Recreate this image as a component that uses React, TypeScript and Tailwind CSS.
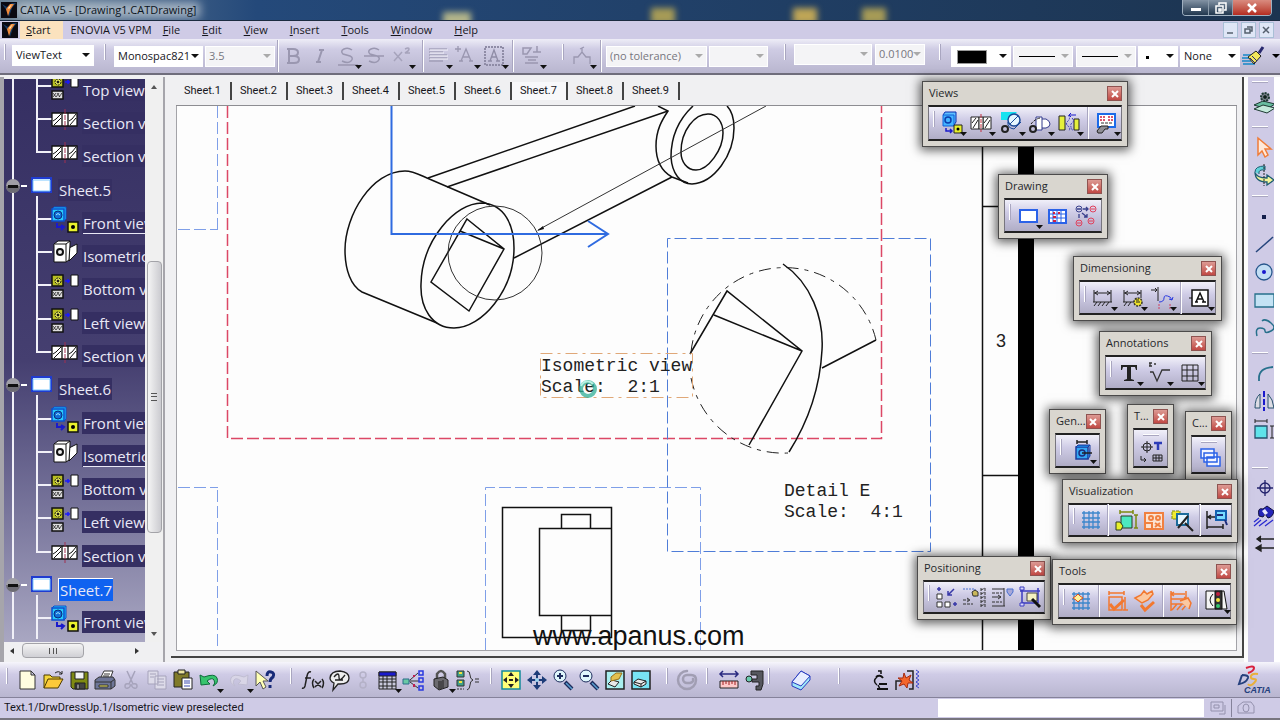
import { FC, ReactNode, useState } from "react";
import clsx from "clsx";

// every icon is drawn on a 24 x 24 grid
const icons: Record<string, ReactNode> = {
  bold: <path d="M8 5v14M8 5h4q5 0 5 3.500t-5 3.500h-4h5q5 0 5 3.500t-5 3.500h-7M6 5h3" fill="none" stroke="#9a97b0" strokeWidth="2" />,
  italic: <path d="M11 6h5M8 18h5M14 6l-4 12" fill="none" stroke="#9a97b0" strokeWidth="2" />,
  underline: <path d="M17 6q-4-3-8-1t-1 5l7 2q4 2 1 5t-9 0M3 21h20" fill="none" stroke="#9a97b0" strokeWidth="1.500" />,
  strike: <path d="M17 6q-4-3-8-1t-1 5l7 2q4 2 1 5t-9 0M2 12h20" fill="none" stroke="#9a97b0" strokeWidth="1.500" />,
  power: <path d="M5 8l8 9M13 8l-8 9M16 5q4-2 4 0t-4 4h5" fill="none" stroke="#a6a3bb" strokeWidth="1.500" />,
  align: (
    <g fill="none">
      <path d="M3 5h18M3 8h14M3 11h18M3 14h18M3 17h14" stroke="#8f8ca6" />
      <path d="M4 6h18M4 9h14M4 12h18M4 15h18" stroke="#f5f4fb" />
    </g>
  ),
  anchor: <path d="M4 2v6M1 5h6M7 17l5-12 5 12M9 13h6M5 17h4M15 17h4" fill="none" stroke="#9a97b0" strokeWidth="1.300" />,
  frame: (
    <g fill="none" stroke="#8f8ca6">
      <rect x="3" y="3" width="18" height="18" strokeWidth="2" strokeDasharray="2 1" />
      <path d="M8 17l4-11 4 11M9 13h6M6 17h4M14 17h4" strokeWidth="1.300" />
    </g>
  ),
  symbols: <path d="M3 4v6h4l4-6zM13 8h8M17 2v6M5 13h13M8 16h8M5 19h13" fill="none" stroke="#9a97b0" strokeWidth="1.500" />,
  tolerance: <path d="M4 20v-7h4l4-5 4 5h4v7M12 8v-4M10 5l4-2" fill="none" stroke="#9a97b0" strokeWidth="1.300" />,
  brush: (
    <g>
      <path d="M2 11h9M1 14h9M1 17h9M2 20h12" stroke="#1688c8" strokeWidth="1.500" />
      <path d="M7 13l8-6 5 5-7 8z" fill="#f2e85c" stroke="#222" />
      <path d="M9 14l5 5M11 12l5 5" stroke="#28286e" />
      <path d="M18 9l4-6" stroke="#28286e" strokeWidth="3" />
    </g>
  ),
  newFile: <path d="M5 3h11l4 4v14h-15zM16 3v4h4" fill="#fffde0" stroke="#333" />,
  open: (
    <g stroke="#4c3a00">
      <path d="M3 20v-13h6l2 2h8v3" fill="#f5d63d" />
      <path d="M3 20l4-9h15l-5 9z" fill="#fcc93a" />
      <path d="M14 5q4-3 7 1M21 3v3h-3" fill="none" stroke="#222" />
    </g>
  ),
  save: (
    <g stroke="#222">
      <path d="M4 4h17v17h-15l-2-2z" fill="#7f8a12" />
      <path d="M8 4h9v7h-9z" fill="#f3f3f3" />
      <path d="M8 15h10v6h-10z" fill="#444" />
      <path d="M10 16h2v5h-2z" fill="#eee" />
    </g>
  ),
  print: (
    <g stroke="#333">
      <path d="M7 11l4-8h9l-3 8z" fill="#fff" />
      <path d="M2 12l4-3h14l2 3v6l-4 3h-16z" fill="#6e7698" />
      <path d="M2 14h16l4-3M18 14v7M11 6h6M10 8h6" fill="none" />
      <path d="M6 17h9v2h-9z" fill="#f2e85c" />
    </g>
  ),
  cut: <path d="M8 3l6 13M16 3l-6 13M10 16q-4-1-4 2t3 2 2-4M14 16q4-1 4 2t-3 2-2-4" fill="none" stroke="#a6a3bb" strokeWidth="1.500" />,
  copy: <path d="M3 3h10v13h-10zM10 8h11v13h-11zM5 6h6M5 9h4M12 11h7M12 14h7M12 17h7" fill="#dddbe9" stroke="#a6a3bb" />,
  paste: (
    <g stroke="#222">
      <path d="M3 4h15v15h-15z" fill="#807a28" />
      <path d="M7 2h7v4h-7z" fill="#eee6a0" />
      <path d="M11 10h10v11h-10z" fill="#fff" />
      <path d="M13 13h6M13 15h6M13 18h6" stroke="#3c4cb0" />
    </g>
  ),
  undo: <path d="M3 7l1 10 9-1-3-3q5-4 7-1t-1 6q6-3 4-8t-13-1z" fill="#36c46d" stroke="#0d6b3a" />,
  redo: <path d="M21 7l-1 10-9-1 3-3q-5-4-7-1t1 6q-6-3-4-8t13-1z" fill="#d8d5e6" stroke="#c0bdd2" />,
  help: (
    <g>
      <path d="M3 3v15l4-4 3 7 3-2-3-6h5z" fill="#ffffb5" stroke="#555" />
      <path d="M14 8q0-5 4-4 4 1 2 5-3 2-3 5M17 17v3" fill="none" stroke="#172a78" strokeWidth="3" />
    </g>
  ),
  formula: (
    <g fill="none" stroke="#222" strokeWidth="1.500">
      <path d="M10 4q-3-1-4 4l-2 10q-1 3-3 2M4 10h6" />
      <path d="M13 11q-3 4 0 9M21 11q3 4 0 9M14 13l6 6M20 13l-6 6" />
    </g>
  ),
  comment: (
    <g fill="#eee" stroke="#222" strokeWidth="1.300">
      <path d="M3 10q1-7 10-7 9 1 9 7t-9 6l-2 0-5 6 1-7q-4-2-4-5z" />
      <path d="M7 9q5-6 5 0t6-2M8 12h8" fill="none" />
    </g>
  ),
  link: <path d="M12 4a3 3 0 100 6 3 3 0 000-6zM12 10v4M12 14a3 3 0 100 6 3 3 0 000-6z" fill="none" stroke="#b4b1c7" strokeWidth="1.500" />,
  table: (
    <g stroke="#222">
      <path d="M4 4h17v17h-17z" fill="#c9c9dc" />
      <path d="M4 4h17v4h-17z" fill="#1a1acc" />
      <path d="M4 11h17M4 14h17M4 18h17M8 8v13M12 8v13M17 8v13" />
    </g>
  ),
  structure: (
    <g fill="none">
      <path d="M7 13h10M8 12l8-7M8 14l8 6" stroke="#333" />
      <path d="M1 11h6v5h-6z" fill="#69c9a5" stroke="#2a6d88" />
      <path d="M17 3h4v4h-4zM17 10h4v4h-4zM17 18h4v4h-4z" stroke="#2a3ae0" strokeWidth="1.500" />
      <path d="M12 7v2M12 16v3" stroke="#c02050" strokeWidth="2" />
    </g>
  ),
  lock: (
    <g stroke="#222">
      <path d="M8 11v-5q4-6 8 0v5" fill="none" stroke="#555" strokeWidth="2.500" />
      <path d="M5 11l9-2 5 3v7l-9 3-5-4z" fill="#6c6b70" />
      <path d="M10 13v8M12 13v8M14 12v8" />
    </g>
  ),
  equiv: (
    <g fill="none" stroke="#333">
      <path d="M2 3h7v6h-7zM2 12h7v6h-7z" fill="#3fa089" />
      <path d="M4 5h3M4 14h3" stroke="#f4e33d" strokeWidth="2" />
      <path d="M12 3q3 0 3 4t3 5q-3 1-3 5t-3 5M20 11h4M20 14h4" />
      <path d="M2 21h7" strokeDasharray="2 1" />
    </g>
  ),
  fitAll: (
    <g>
      <path d="M3 3h18v18h-18z" fill="#ffff78" stroke="#158a9a" strokeWidth="1.500" />
      <path d="M12 4l3 4h-6zM12 20l3-4h-6zM4 12l4-3v6zM20 12l-4-3v6zM10 11h4v2h-4z" fill="#222" />
    </g>
  ),
  pan: (
    <g fill="#1d3c78">
      <path d="M12 2l4 5h-8zM12 22l4-5h-8zM2 12l5-4v8zM22 12l-5-4v8z" />
      <path d="M12 6v12M6 12h12" stroke="#1d3c78" strokeWidth="2" />
      <circle cx="12" cy="12" r="2" fill="#9fd5f0" />
    </g>
  ),
  zoomIn: (
    <g fill="none" stroke="#1d2c5c">
      <path d="M14 14l7 7" strokeWidth="4" />
      <path d="M15 15l6 6" stroke="#5aa0d0" strokeWidth="1.500" />
      <circle cx="9" cy="8" r="6" fill="#dff6fb" />
      <path d="M6 8h6M9 5v6" strokeWidth="2" />
    </g>
  ),
  zoomOut: (
    <g fill="none" stroke="#1d2c5c">
      <path d="M14 14l7 7" strokeWidth="4" />
      <path d="M15 15l6 6" stroke="#5aa0d0" strokeWidth="1.500" />
      <circle cx="9" cy="8" r="6" fill="#dff6fb" />
      <path d="M6 8h6" strokeWidth="2" />
    </g>
  ),
  viewSwap: (
    <g stroke="#222">
      <path d="M3 3h18v18h-18z" fill="#a9efef" strokeWidth="1.500" />
      <path d="M5 16l4-4 7 2-4 5z" fill="#e8e8e8" />
      <path d="M8 9l5-4h6l-3 6-8 2z" fill="#e2c04d" stroke="#96701c" />
    </g>
  ),
  viewHide: (
    <g stroke="#222">
      <path d="M3 3h18v18h-18z" fill="#78e4f4" strokeWidth="1.500" />
      <path d="M5 14l4-3 8 2v3l-5 3-7-3z" fill="#e8e8e8" />
      <path d="M5 14l7 2 5-3M12 16v3" fill="none" />
    </g>
  ),
  swirl: (
    <g fill="none" strokeLinecap="round">
      <path d="M12 3a9 9 0 109 9q0-5-5-5h-4a4 4 0 100 8h3q4-1 3-4" stroke="#a19eb3" strokeWidth="2.500" />
    </g>
  ),
  ruler: (
    <g fill="none" stroke="#2a2a80">
      <path d="M3 6h18M6 3l-3 3 3 3M18 3l3 3-3 3" strokeWidth="1.500" />
      <path d="M3 13h18v7h-18z" fill="#ffc9c9" stroke="#222" />
      <path d="M6 13v4M9 13v3M12 13v4M15 13v3M18 13v4" stroke="#a02020" />
    </g>
  ),
  caliper: (
    <g stroke="#222">
      <path d="M8 3h12v13l-2 6h-5v-4h3v-4h-7v-3h5v-4h-6z" fill="#56575e" />
      <circle cx="6" cy="11" r="3" fill="#6ccbb0" />
    </g>
  ),
  slab: (
    <g stroke="#2a3cc0">
      <path d="M3 14l9-11 9 5v4l-9 10-9-4z" fill="#9fe8f8" />
      <path d="M3 14l9-11 9 5-9 10z" fill="#e8edff" />
    </g>
  ),
  robot: (
    <g fill="none" stroke="#111">
      <path d="M7 9q4-3 7 1M8 21h11M10 16h8" strokeWidth="2" />
      <path d="M9 3h3v3M8 9q-5 4 0 8M9 17l2 4" strokeWidth="1.500" />
    </g>
  ),
  explode: (
    <g fill="none" stroke="#222">
      <path d="M1 22v-9h7M12 3h6v18h-4" strokeWidth="1.500" />
      <path d="M21 2l3 2-3 2 3 2-3 2 3 2-3 2 3 2-3 2 3 2" stroke="#3c48d0" />
      <path d="M9 5l2 5 5-3-2 5 4 3-5 0-1 5-3-4-5 2 3-5-4-3 5 0z" fill="#f4662b" stroke="#a52a10" />
    </g>
  ),
  frontView: (
    <g>
      <path d="M3 4l2-3h11v10l-2 3" fill="#5fc0ff" stroke="#0c2fae" />
      <path d="M3 4h11v11h-11z" fill="#43b4ff" stroke="#1060d8" />
      <circle cx="8" cy="9" r="3" fill="none" stroke="#0b3cad" strokeWidth="1.500" />
      <path d="M6 17v3h6M10 18l2 2-2 2" fill="none" stroke="#1a1acc" strokeWidth="1.500" />
      <path d="M14 14h8v8h-8z" fill="#e8f02b" stroke="#222" />
      <circle cx="18" cy="18" r="1.500" />
    </g>
  ),
  sectionView: (
    <g stroke="#222" fill="#fff">
      <path d="M2 6h8v12h-8zM14 6h8v12h-8z" />
      <path d="M10 6h4v12h-4z" />
      <path d="M3 12l4-5M4 17l5-8M15 12l4-5M16 17l5-8" />
      <path d="M12 3v18" stroke="#c03040" strokeDasharray="4 1" />
    </g>
  ),
  detailView: (
    <g stroke="#222">
      <path d="M2 1h16l-8 8h-8z" fill="#15e2f0" stroke="none" />
      <circle cx="15" cy="9" r="6" fill="#e6f7ff" stroke="#1a4a98" strokeWidth="1.500" />
      <path d="M11 13l8-8M9 11q-1 6 6 7l7-7" fill="none" stroke="#1a4a98" />
      <circle cx="6" cy="18" r="3" fill="none" strokeWidth="2" />
    </g>
  ),
  clipView: (
    <g stroke="#222" fill="none">
      <path d="M8 6h6v13h-6zM14 8h4q4 2 4 5t-4 4h-4" fill="#fff" stroke="#333a8c" />
      <circle cx="5" cy="18" r="3" strokeWidth="2" />
      <path d="M3 13q4-5 9-6" strokeDasharray="3 1" />
    </g>
  ),
  breakView: (
    <g fill="none" stroke="#222">
      <path d="M2 5h6v14h-6zM17 8h5v11h-5z" fill="#e6f03c" />
      <path d="M11 4q3 3 0 6t0 5 1 5M15 7q3 3 0 5t1 8" stroke="#3636b8" strokeDasharray="2 1" />
      <path d="M19 4h-7M14 2l-2 2 2 2" stroke="#1a1acc" />
    </g>
  ),
  wizard: (
    <g>
      <path d="M4 3h17v13h-17z" fill="#fff" stroke="#1c6ae8" strokeWidth="2" />
      <path d="M6 6h6M6 9h6M14 6h5M14 9h5" stroke="#d02040" strokeWidth="1.500" strokeDasharray="2 1" />
      <path d="M7 12h11" stroke="#333" strokeDasharray="3 1" />
      <path d="M3 20l4-5h7v3h-3l-3 4h-4z" fill="#8f8f96" stroke="#222" />
    </g>
  ),
  sheet: <path d="M4 6h17v12h-17z" fill="#fff" stroke="#2b62e8" strokeWidth="2" />,
  newDetail: (
    <g>
      <path d="M4 6h17v13h-17z" fill="#fff" stroke="#2b62e8" strokeWidth="2" />
      <path d="M4 10h17M4 14h17M8 6v13M12 6v13M16 6v13" stroke="#2b62e8" />
      <path d="M8 9h2M13 9h2M8 13h3M8 17h3" stroke="#d02040" strokeWidth="2" />
    </g>
  ),
  instantiate: (
    <g fill="none" stroke="#e0405c">
      <circle cx="19" cy="5" r="3" /><path d="M17 5h4" />
      <circle cx="5" cy="19" r="3" /><path d="M3 19h4" />
      <circle cx="17" cy="17" r="3" /><path d="M15 17h4" />
      <circle cx="5" cy="5" r="3" stroke="#39408c" />
      <path d="M3 5h4M9 5h5M5 10v4M8 9l5 4M12 3l2 2-2 2M10 13h3v-3" stroke="#39408c" strokeWidth="1.300" />
    </g>
  ),
  dimension: <path d="M3 4v12M20 4v12M3 7h17M7 5l-3 2 3 2M16 5l3 2-3 2M2 16h19M3 20l3-4M7 20l3-4M11 20l3-4M15 20l3-4" fill="none" stroke="#222" />,
  dimensionGen: (
    <g>
      <path d="M3 4v12M20 4v8M3 7h17M7 5l-3 2 3 2M16 5l3 2-3 2M2 16h11M3 20l3-4M7 20l3-4" fill="none" stroke="#222" />
      <circle cx="17" cy="16" r="4" fill="#f0e428" stroke="#333" strokeWidth="1.500" strokeDasharray="2 1" />
      <path d="M15 16h4M15 14h3" stroke="#222" />
    </g>
  ),
  interrupt: (
    <g fill="none" stroke="#222">
      <path d="M1 4h6M5 2l2 2-2 2M8 1v14" />
      <path d="M9 16q5 0 5-4t6-1l2 3M19 13l3 1 1-3" stroke="#2a3ae0" />
      <path d="M9 18v5M20 18v5" stroke="#d04060" strokeDasharray="2 1" />
    </g>
  ),
  datum: (
    <g fill="none" stroke="#111">
      <path d="M4 4h16v16h-16z" fill="#fff" strokeWidth="1.500" />
      <path d="M1 12h3" />
      <path d="M8 16l4-9 4 9M9 13h5M7 16h3M14 16h4" strokeWidth="1.500" />
    </g>
  ),
  text: <path d="M4 4h16v5h-1l-1-3h-4v12l3 1v1h-10v-1l3-1v-12h-4l-1 3h-1z" fill="#222" />,
  roughness: <path d="M2 2h3M2 5h3M3 2v3M7 3h2M3 11h3l4 9 5-11h8" fill="none" stroke="#333" strokeWidth="1.300" />,
  grid: <path d="M4 4h16v16h-16zM9 4v16M15 4v16M4 9h16M4 15h16" fill="none" stroke="#222" />,
  generate: (
    <g>
      <path d="M6 8h12v12h-12z" fill="#35a8f4" stroke="#1c3c9c" strokeWidth="1.500" />
      <path d="M6 8l2-2h12l-2 2M20 6v11l-2 3" fill="#177adc" stroke="#1c3c9c" />
      <circle cx="12" cy="14" r="3" fill="none" stroke="#1c2c7c" strokeWidth="1.500" />
      <path d="M7 3h10M7 1v4M17 1v4M12 14h10" stroke="#222" strokeWidth="1.500" />
    </g>
  ),
  textPos: (
    <g fill="none" stroke="#222">
      <circle cx="7" cy="8" r="4" />
      <path d="M1 8h12M7 2v12M1 17v4h5M4 19l2 2-2 2M13 16h9v6h-9zM16 16v6M19 16v6M13 19h9" />
      <path d="M14 4h8M18 4v7" stroke="#2c3cb8" strokeWidth="2.500" />
    </g>
  ),
  cascade: <path d="M3 3h13v9h-13zM6 7h13v9h-13zM9 11h13v9h-13z" fill="#f3f5ff" stroke="#2b62e8" strokeWidth="1.500" />,
  gridBlue: <path d="M5 3v18M10 3v18M14 3v18M19 3v18M3 5h18M3 10h18M3 14h18M3 19h18" fill="none" stroke="#3c86cc" strokeWidth="1.300" />,
  analysis: (
    <g stroke="#2a3a20">
      <path d="M7 8h11v12h-11z" fill="#4ce8c0" />
      <path d="M6 4h13M6 2v4M19 2v4M22 7v13M20 7h4M20 20h4" fill="none" stroke="#7d8a12" strokeWidth="1.500" />
      <path d="M2 14h4l3 4-2 4h-5z" fill="#e8f02b" />
    </g>
  ),
  filter: (
    <g fill="none" stroke="#f08040">
      <path d="M3 5h18v16h-18z" fill="#fbe3d2" strokeWidth="2" />
      <circle cx="9" cy="10" r="2" strokeWidth="2" /><circle cx="16" cy="10" r="2" strokeWidth="2" />
      <path d="M4 15h6v5M13 15l6 4M13 19l5-4" strokeWidth="2" />
    </g>
  ),
  magnify: (
    <g>
      <path d="M2 3h8v8h-8z" fill="#f2ec30" stroke="#7d8a12" strokeDasharray="3 1" />
      <path d="M7 6h11v11h-11z" fill="#e6f6ff" stroke="#1c6c9c" strokeWidth="2" />
      <path d="M18 8l-10 12M15 15l8 8" stroke="#222" strokeWidth="2" />
    </g>
  ),
  showConstraint: (
    <g fill="none" stroke="#222">
      <path d="M2 3v18M18 16v5M2 19h16M3 9h8M6 7l-3 2 3 2" strokeWidth="1.500" />
      <path d="M11 3h10v9h-10z" fill="#77dcff" stroke="#1560b0" strokeWidth="2" />
      <path d="M12 7h6M20 12l2 5" stroke="#1c2c7c" strokeWidth="2" />
    </g>
  ),
  posA: (
    <g fill="none" stroke="#333">
      <path d="M3 9h5v5h-5zM3 17h5v5h-5zM11 17h5v5h-5z" fill="#fff" />
      <path d="M5 2v4M3 4h4M19 19h4M21 17v4M20 4l-6 6M14 6v4h4" stroke="#3838a8" strokeWidth="1.500" />
    </g>
  ),
  posB: (
    <g fill="none" stroke="#333">
      <path d="M1 4h12M13 4v9" stroke="#4870d0" strokeDasharray="2 1" />
      <path d="M10 7l3-2 3 2v4h-5z" fill="#c9b75a" />
      <path d="M1 15h7M5 13l3 2-3 2M1 19h10M19 3v19M19 5l4-2M19 9l4-2M19 13l4-2M19 17l4-2M19 21l4-2M23 3v19" strokeDasharray="3 1" />
    </g>
  ),
  posC: (
    <g fill="none" stroke="#333">
      <path d="M2 4h12M2 12h9M8 10l3 2-3 2M2 21h13M14 3v18" />
      <path d="M2 8h10M2 17h10" strokeDasharray="3 1" />
      <path d="M17 4h6v3l-3 4-3-4z" fill="#a8a8d8" stroke="#4870d0" />
    </g>
  ),
  posD: (
    <g fill="none" stroke="#3c3cc0">
      <path d="M4 3v17M2 6h20M4 18h16M20 3v15" strokeWidth="1.500" />
      <path d="M9 8h10v8h-10z" fill="#f4f0c0" stroke="#444" />
      <path d="M2 2h4v3h-4zM2 18h4v3h-4z" fill="#d8d8ff" />
      <path d="M14 14l8 8" stroke="#111" strokeWidth="3" />
    </g>
  ),
  snap: (
    <g fill="none">
      <path d="M5 3v18M10 3v18M14 3v18M19 3v18M3 5h18M3 10h18M3 14h18M3 19h18" stroke="#3c86cc" strokeWidth="1.300" />
      <path d="M9 5l2 2 3 2-3 2-2 2-2-2-3-2 3-2z" fill="#fff29a" stroke="#e05020" />
    </g>
  ),
  checkDim: (
    <g fill="none" stroke="#f27830" strokeWidth="1.500">
      <path d="M4 4h15M4 2v4M19 2v4M4 8h13v13h-13zM20 8v13M18 21h5" />
      <path d="M5 15l4 5 10-9" strokeWidth="3" />
    </g>
  ),
  checkHand: (
    <g fill="none" stroke="#f27830">
      <path d="M2 9l6-3 3-4 3 3 5-3 1 3-5 6-6 3z" fill="#fbc8a0" strokeWidth="1.500" />
      <path d="M8 16l4 5 9-8" strokeWidth="3" />
    </g>
  ),
  filterDim: (
    <g fill="none" stroke="#f27830" strokeWidth="1.500">
      <path d="M3 2v20M3 5h14M6 3l-3 2 3 2M3 10h16M16 8l3 2-3 2M18 2v8M3 15h18M4 21l5-6M9 21l5-6M14 21l5-6" />
      <path d="M12 12l8-3 3 5-2 6" fill="#fbc8a0" />
    </g>
  ),
  traffic: (
    <g stroke="#111">
      <path d="M2 2h18l3 18h-21z" fill="#f4f4f4" />
      <path d="M11 2h7v18h-7z" fill="#333" />
      <path d="M9 5q-6 6 0 12" fill="none" />
      <circle cx="14" cy="5" r="2" fill="#c02040" stroke="none" />
      <circle cx="14" cy="11" r="2" fill="#f4e33d" stroke="none" />
      <circle cx="14" cy="17" r="2" fill="#36c46d" stroke="none" />
    </g>
  ),
  workbench: (
    <g stroke="#1d3a33">
      <path d="M3 15l9-4 12 3-8 5z" fill="#68bda0" />
      <path d="M3 19l9-4 12 3-8 5z" fill="#c3eadb" />
      <circle cx="14" cy="7" r="4" fill="#777b86" strokeWidth="2" strokeDasharray="2 1" />
      <circle cx="14" cy="7" r="1.500" fill="#111" />
    </g>
  ),
  select: <path d="M7 3v17l4-4 3 6 3-2-3-6h6z" fill="#ffe9da" stroke="#f07c38" strokeWidth="1.500" />,
  orbit: (
    <g stroke="#1d5c70" fill="none">
      <path d="M4 9q1 6 12 6v-3l7 5-7 5v-3q-12 0-12-10z" fill="#f2f59a" strokeWidth="1.300" />
      <path d="M4 9q0-6 10-6v4q-7-1-6 4" fill="#5fd0d8" />
      <path d="M13 1v22" stroke="#222" strokeDasharray="2 1" />
    </g>
  ),
  point: <path d="M11 11h4v4h-4z" fill="#14204c" />,
  line: <path d="M5 20l17-15" stroke="#25457c" strokeWidth="1.500" />,
  circle: (
    <g>
      <circle cx="13" cy="12" r="8" fill="#c3def4" stroke="#27568c" strokeWidth="1.300" />
      <circle cx="13" cy="12" r="2" fill="#1a1acc" />
    </g>
  ),
  rect: <path d="M4 6h19v13h-19z" fill="#c3e2f4" stroke="#27708c" strokeWidth="1.300" />,
  spline: <path d="M6 20q-2-8 3-8t5 3 6 0 0-8-9-2" fill="none" stroke="#27708c" strokeWidth="1.500" />,
  corner: <path d="M8 20v-3q0-10 14-11" fill="none" stroke="#27708c" strokeWidth="1.800" />,
  mirror: (
    <g fill="none" stroke="#27506c">
      <path d="M9 5v14h-5q0-10 5-14zM17 5q5 5 6 14h-6z" fill="#dcdce4" />
      <path d="M13 2v20" stroke="#1a1acc" strokeWidth="2" strokeDasharray="6 2" />
    </g>
  ),
  constraint: (
    <g stroke="#222" fill="none">
      <path d="M4 9h12v12h-12z" fill="#5fe3ea" stroke="#27506c" strokeWidth="1.300" />
      <path d="M4 2v4M16 2v4M4 4h12M19 9h4M19 21h4M21 9v12" />
    </g>
  ),
  target: (
    <g fill="none" stroke="#23236c" strokeWidth="1.300">
      <circle cx="14" cy="12" r="5" /><path d="M6 12h16M14 4v16" />
    </g>
  ),
  hatch: (
    <g>
      <path d="M8 12q-2-9 4-7l4-3 7 5q-1 6-6 7l-3-4-2 3z" fill="#2424b8" stroke="#11113c" />
      <path d="M11 7l3-2 3 4-3 2z" fill="#e8e8ff" />
      <path d="M3 22l7-6M8 22l8-6M14 22l8-6M3 18l5-4" stroke="#2a2ad0" strokeWidth="1.300" />
    </g>
  ),
  arrows: <path d="M24 7h-18M10 4l-4 3 4 3M24 16h-18M10 13l-5 3 5 3z" fill="#222" stroke="#222" strokeWidth="1.300" />,
  statusBox: <path d="M5 6h12v9h-12zM8 9h5v3h-5zM19 9v9h-6" fill="none" stroke="#9491ad" />,
  statusCam: <path d="M4 17v-7l5-4h8l3 4v7zM12 8a3 4 0 100 8 3 4 0 000-8z" fill="none" stroke="#9491ad" />,
};

type IconButtonT = { name: string; label: string; menu?: boolean; className?: string };

const IconButton: FC<IconButtonT> = ({ name, label, menu, className }) => {
  return (
    <button type="button" aria-label={label} className={clsx("flex h-7 shrink-0 items-center justify-center", className)}>
      <svg className="size-6 overflow-visible" viewBox="0 0 24 24">
        {icons[name]}
        {menu && <path d="M20 21h7l-3.500 4z" fill="#111" />}
      </svg>
    </button>
  );
};

const Grip: FC<{ className?: string }> = ({ className }) => (
  <span className={clsx("h-4 w-0.5 shrink-0 border-r border-[#a9a6c0] bg-white", className)} />
);

const Divider: FC<{ className?: string }> = ({ className }) => (
  <span className={clsx("h-8 w-0.5 shrink-0 border-r border-white bg-[#a9a6c0]", className)} />
);

type ComboT = { label: string; value?: string; disabled?: boolean; className?: string; children?: ReactNode };

const Combo: FC<ComboT> = ({ label, value = "", disabled, className, children }) => {
  return (
    <span className={clsx("relative flex h-[21px] shrink-0 bg-white", className)}>
      <select
        aria-label={label}
        disabled={disabled}
        className={clsx("w-full appearance-none truncate border border-white pl-[3px] leading-4", disabled ? "bg-[#f4f4f6] text-[#77767e]" : "bg-white")}
      >
        <option>{value}</option>
      </select>
      {children}
      <svg className="pointer-events-none absolute right-1 top-2 h-1 w-2" viewBox="0 0 8 4">
        <path d="M0 0h8l-4 4z" fill={disabled ? "#aaa" : "#111"} />
      </svg>
    </span>
  );
};

const AppLogo = () => (
  <svg className="h-4 w-4 shrink-0" viewBox="0 0 16 16">
    <rect width="16" height="16" fill="#0a0a12" />
    <path d="M1 2l5 3 5-4 4 0-4 5-3 9-2-6z" fill="#173a63" />
    <path d="M5 7l4-5h4l-4 6-2 6z" fill="#f08a3a" />
    <path d="M7 6l4-4-3 5z" fill="#fff3c8" />
  </svg>
);

const TitleBar = () => (
  <header className="relative flex h-5 shrink-0 items-center overflow-hidden bg-linear-to-r from-[#6e8598] via-[#24497a] via-20% to-[#1c3450]">
    <span className="absolute left-[443px] top-3 h-4 w-7 bg-[#b3b58a] blur-[3px]" />
    <span className="absolute left-[651px] top-2 h-4 w-6 bg-[#a79b56] blur-[3px]" />
    <span className="absolute left-[793px] top-2 h-4 w-6 bg-[#bfa656] blur-[3px]" />
    <span className="absolute left-[862px] top-2 h-4 w-6 bg-[#a79b56] blur-[3px]" />
    <span className="absolute left-4 top-0.5 h-4 w-46 bg-[#c5ced6] opacity-75 blur-[5px]" />
    <div className="relative flex items-center gap-[3px] pl-px">
      <AppLogo />
      <h1 className="text-[11px] text-[#0b1420]">CATIA V5 - [Drawing1.CATDrawing]</h1>
    </div>
    <div className="relative mr-2 ml-auto flex h-4 self-start overflow-hidden rounded-b border border-t-0 border-[#9fb0c0]">
      <button type="button" aria-label="Minimize" className="flex w-[26px] items-center justify-center border-r border-[#8c9cab] bg-linear-to-b from-[#8393a4] to-[#22384f]">
        <span className="mt-1 h-[3px] w-2.5 bg-white" />
      </button>
      <button type="button" aria-label="Restore" className="flex w-6 items-center justify-center border-r border-[#8c9cab] bg-linear-to-b from-[#8393a4] to-[#22384f]">
        <svg className="h-3 w-3" viewBox="0 0 12 12" fill="none" stroke="#fff" strokeWidth="1.500">
          <path d="M4 3v-2h7v7h-2M1 4h7v7h-7zM4 7h2v2h-2z" />
        </svg>
      </button>
      <button type="button" aria-label="Close" className="flex w-[38px] items-center justify-center bg-linear-to-b from-[#d98b7f] to-[#b32a20]">
        <svg className="h-2.5 w-2.5" viewBox="0 0 10 10">
          <path d="M1 1l8 8M9 1l-8 8" stroke="#fff" strokeWidth="2.500" />
        </svg>
      </button>
    </div>
  </header>
);

const menus = ["File", "Edit", "View", "Insert", "Tools", "Window", "Help"];

const MenuBar = () => (
  <nav className="flex h-[19px] shrink-0 items-center border-t border-[#1b2b40] bg-[#cfcbe6] text-[11px]">
    <span className="w-5 shrink-0 pl-0.5">
      <AppLogo />
    </span>
    <button type="button" className="h-full bg-[#fbe2be] pr-3 pl-1.5">
      <u>S</u>tart
    </button>
    <button type="button" className="pl-2">ENOVIA V5 VPM</button>
    {menus.map((menu) => (
      <button type="button" key={menu} className="px-[11px]">
        <u>{menu[0]}</u>
        {menu.slice(1)}
      </button>
    ))}
    <div className="mr-1.5 ml-auto flex gap-[3px]">
      {["M3 10h6", "M5 4h5v4h-2M3 6h5v4h-5z", "M3 4l6 6M9 4l-6 6"].map((d, i) => (
        <button type="button" key={d} aria-label={["Minimize sheet", "Restore sheet", "Close sheet"][i]} className="h-4 w-[15px] border border-[#a9bfd6] bg-[#dfe6f6]">
          <svg className="h-3.5 w-3" viewBox="0 0 12 14" fill="none" stroke="#56606e" strokeWidth="1.500">
            <path d={d} />
          </svg>
        </button>
      ))}
    </div>
  </nav>
);

const TopToolbar = () => (
  <div className="flex h-9 shrink-0 items-center overflow-hidden border-b-2 border-[#6f6d7c] bg-linear-to-b from-[#eeedf7] via-[#cfcce4] via-30% to-[#b9b6cf] pl-1 text-[11px]">
    <Grip className="mb-2" />
    <Combo label="Style" value="ViewText" className="mb-0.5 ml-1.5 w-[82px]" />
    <Grip className="mb-2 ml-2.5" />
    <Combo label="Font name" value="Monospac821" className="ml-2 w-[89px]" />
    <Combo label="Font size" value="3.5" disabled className="ml-0.5 w-[70px]" />
    <Divider className="ml-0.5" />
    <IconButton name="bold" label="Bold" className="w-[27px]" />
    <IconButton name="italic" label="Italic" className="w-[27px]" />
    <IconButton name="underline" label="Underline" menu className="w-[27px]" />
    <IconButton name="strike" label="Strikethrough" className="w-[27px]" />
    <IconButton name="power" label="Superscript" menu className="w-[27px]" />
    <Divider className="ml-2" />
    <IconButton name="align" label="Justification" menu className="w-7" />
    <IconButton name="anchor" label="Anchor point" menu className="w-7" />
    <IconButton name="frame" label="Frame" menu className="w-7" />
    <Divider className="ml-1" />
    <IconButton name="symbols" label="Insert symbol" menu className="w-9" />
    <Grip className="mb-2 ml-3" />
    <IconButton name="tolerance" label="Tolerance type" menu className="w-9" />
    <Divider />
    <Combo label="Tolerance" value="(no tolerance)" disabled className="ml-1 w-[101px]" />
    <Combo label="Tolerance value" disabled className="ml-0.5 w-[59px]" />
    <Grip className="mb-2 ml-4" />
    <Combo label="Numerical display" disabled className="mb-1 ml-2 w-[78px]" />
    <Combo label="Precision" value="0.0100" disabled className="mb-1 ml-[3px] w-[50px]" />
    <Grip className="mb-2 ml-3.5" />
    <Combo label="Line color" className="ml-2.5 w-15">
      <span className="pointer-events-none absolute top-1 left-1.5 h-3.5 w-[30px] border border-[#999] bg-black" />
    </Combo>
    <Combo label="Line thickness" disabled className="ml-0.5 w-15">
      <span className="pointer-events-none absolute top-2.5 left-1.5 h-px w-9 bg-black" />
    </Combo>
    <Combo label="Line type" disabled className="ml-[3px] w-15">
      <span className="pointer-events-none absolute top-2.5 left-1.5 h-px w-9 bg-black" />
    </Combo>
    <Combo label="Point type" className="ml-0.5 w-10">
      <span className="pointer-events-none absolute top-2.5 left-2 size-[3px] bg-black" />
    </Combo>
    <Combo label="Layer" value="None" className="ml-0.5 w-15" />
    <IconButton name="brush" label="Copy object format" className="w-[26px]" />
    <svg className="ml-auto h-1 w-2 shrink-0" viewBox="0 0 8 4">
      <path d="M0 0h8l-4 4z" />
    </svg>
  </div>
);

type NodeKind = "sheet" | "front" | "iso" | "side" | "section";
type TreeRowT = { kind: NodeKind; text: string; last?: boolean; underlined?: boolean; selected?: boolean };

const tree: TreeRowT[] = [
  { kind: "side", text: "Top view" },
  { kind: "section", text: "Section view" },
  { kind: "section", text: "Section view", last: true },
  { kind: "sheet", text: "Sheet.5" },
  { kind: "front", text: "Front view", underlined: true },
  { kind: "iso", text: "Isometric view" },
  { kind: "side", text: "Bottom view" },
  { kind: "side", text: "Left view" },
  { kind: "section", text: "Section view", last: true },
  { kind: "sheet", text: "Sheet.6" },
  { kind: "front", text: "Front view" },
  { kind: "iso", text: "Isometric view", underlined: true },
  { kind: "side", text: "Bottom view" },
  { kind: "side", text: "Left view" },
  { kind: "section", text: "Section view", last: true },
  { kind: "sheet", text: "Sheet.7", selected: true },
  { kind: "front", text: "Front view" },
];

// x is measured from the left edge of the tree, the text line sits at y 17
const nodeDrawings: Record<NodeKind, ReactNode> = {
  sheet: (
    <g>
      <circle cx="9" cy="13" r="7" fill="#a09fa6" />
      <path d="M2 13a7 7 0 0014 0z" fill="#6d6c74" />
      <path d="M4 12h10v3h-10z" fill="#111" />
      <path d="M17 13h6" stroke="#fff" strokeWidth="2" />
      <path d="M28 5h19v14h-19z" fill="#fff" stroke="#1f3cd0" strokeWidth="2" />
      <path d="M29 7h17v11h-17z" fill="none" stroke="#7cc8ff" />
    </g>
  ),
  front: (
    <g>
      <path d="M48 3l2-2h12v12l-2 2" fill="#1cc6f4" stroke="#0c4fd0" />
      <path d="M48 3h12v12h-12z" fill="#29c9fa" stroke="#0c4fd0" strokeWidth="1.500" />
      <circle cx="54" cy="9" r="4" fill="#1270d8" stroke="#0b2c7d" />
      <path d="M52 9q2-3 4 0" fill="none" stroke="#9fe8ff" />
      <path d="M53 17v4h6M57 19l3 2-3 3" fill="none" stroke="#1a1acc" strokeWidth="2" />
      <path d="M64 16h10v10h-10z" fill="#eaf22d" stroke="#111" strokeWidth="1.500" />
      <circle cx="69" cy="21" r="2" />
    </g>
  ),
  iso: (
    <g fill="#fff" stroke="#111">
      <path d="M65 9l8-4v9l-8 8z" />
      <path d="M50 5l4-3h12v4l-1 15-3 2h-12z" />
      <path d="M50 5h12v18M62 5l4-3" />
      <circle cx="56" cy="13" r="3" fill="#eee" strokeWidth="2" />
    </g>
  ),
  side: (
    <g stroke="#111">
      <path d="M48 3h11v11h-11z" fill="#b8bf22" strokeWidth="1.500" />
      <circle cx="54" cy="9" r="3" fill="#eef060" strokeDasharray="2 1" />
      <circle cx="54" cy="9" r="1" />
      <path d="M61 9h5M64 7v4" stroke="#1a1aff" strokeWidth="1.500" />
      <path d="M67 3h7v11h-7z" fill="#fff" />
      <path d="M48 18h11v8h-11z" fill="#ddd" strokeWidth="1.500" />
      <path d="M49 24l3-4M52 24l3-4M55 24l3-4M49 20l3 4M53 20l3 4" strokeWidth=".7" />
    </g>
  ),
  section: (
    <g stroke="#111" fill="#fff">
      <path d="M48 7h10v13h-10zM64 7h9v13h-9zM58 7h6v13h-6z" strokeWidth="1.300" />
      <path d="M49 15l3-2 5-5M50 19l7-7M65 15l3-2 4-5M66 19l6-7" />
      <path d="M61 3v21" stroke="#a03050" strokeDasharray="5 1" />
    </g>
  ),
};

const TreeRow: FC<TreeRowT> = ({ kind, text, last, underlined, selected }) => {
  const isSheet = kind === "sheet";
  return (
    <li className="flex min-w-0 items-center overflow-visible whitespace-nowrap">
      <svg className={clsx("h-[34px] shrink-0 overflow-visible", isSheet ? "w-[54px]" : "w-[78px]")} viewBox={isSheet ? "0 0 54 34" : "0 0 78 34"}>
        <path d="M9 0v34" stroke="#f1f0f8" strokeWidth="2" />
        {isSheet && <path d="M33 23v11" stroke="#f1f0f8" strokeWidth="2" />}
        {!isSheet && <path d={last ? "M33 0v13h15" : "M33 0v34M33 13h15"} fill="none" stroke="#f1f0f8" strokeWidth="2" />}
        {nodeDrawings[kind]}
      </svg>
      <span
        className={clsx(
          "px-px leading-[22px]",
          underlined && "underline underline-offset-4",
          selected ? "border-t border-l border-white bg-[#0f62f0]" : "bg-[#352f62]"
        )}
      >
        {text}
      </span>
    </li>
  );
};

const TreePanel = () => (
  <aside className="flex w-[165px] shrink-0 flex-col border-r-2 border-l-4 border-[#a6a5ab] bg-[#f0f0f2] pt-0.5">
    <div className="flex min-h-0 flex-1">
      <div className="min-w-0 flex-1 overflow-hidden bg-linear-to-b from-[#352f62] via-[#453f70] via-50% to-[#a9a7c2]">
        <ul className="-mt-1.5 grid h-[566px] auto-rows-fr text-[15px] text-[#e9e8f6]">
          {tree.map((row, i) => (
            <TreeRow key={i} {...row} />
          ))}
        </ul>
      </div>
      <div className="flex w-[18px] flex-col items-center bg-[#f0f0f0] py-1.5">
        <svg className="h-1 w-1.5" viewBox="0 0 6 4"><path d="M3 0l3 4h-6z" fill="#555" /></svg>
        <div className="mt-[172px] flex h-[272px] w-[15px] items-center justify-center rounded-sm border border-[#a3a3a8] bg-linear-to-r from-[#f4f4f4] to-[#cbcbd0]">
          <span className="flex h-2 w-1.5 flex-col justify-between border-y border-[#555]"><i className="mt-[2px] h-px bg-[#555]" /></span>
        </div>
        <svg className="mt-auto h-1 w-1.5" viewBox="0 0 6 4"><path d="M3 4l3-4h-6z" fill="#555" /></svg>
      </div>
    </div>
    <div className="mb-[3px] flex h-[17px] items-center pr-6 pl-1.5">
      <svg className="h-1.5 w-1" viewBox="0 0 4 6"><path d="M0 3l4-3v6z" fill="#333" /></svg>
      <div className="ml-2 flex h-[15px] w-[62px] items-center justify-center rounded-sm border border-[#a3a3a8] bg-linear-to-b from-[#f4f4f4] to-[#d0d0d5]">
        <span className="flex h-1.5 w-2 justify-center border-x border-[#555]"><i className="w-px bg-[#555]" /></span>
      </div>
      <svg className="ml-auto h-1.5 w-1" viewBox="0 0 4 6"><path d="M4 3l-4-3v6z" fill="#333" /></svg>
    </div>
  </aside>
);

const Drawing = () => (
  <svg className="block h-[544px] w-[1062px] max-w-none font-['Liberation_Mono',monospace]" viewBox="177 106 1062 544" fill="none">
    {/* sheet frame */}
    <path d="M982.500 106v544M982 206.500h37M982 475.500h37" stroke="#111" strokeWidth="1.500" />
    <path d="M1018 106h16v544h-16z" fill="#000" />
    <text x="996" y="347" fill="#222" className="font-['Liberation_Sans',sans-serif] text-[18px]">3</text>

    {/* view frames */}
    <g stroke="#7f9fe8" strokeDasharray="12 4">
      <path d="M217.500 106v123M178 229.500h40M178 487.500h40M217.500 490v160" />
      <path d="M485.500 650v-162.500h215v162.500" />
    </g>
    <path d="M227.500 106v332.500h654v-332.500" stroke="#dc4766" strokeWidth="1.500" strokeDasharray="12 4" />
    <path d="M667.500 551.500v-313h263v313z" stroke="#4f7dd8" strokeDasharray="12 4" />

    {/* lever */}
    <g stroke="#111" strokeWidth="1.500">
      <path d="M490 205L427 178C420 175 413 171 405 171C372 171 345 215 345 250C345 270 351 286 362 292L437 323" />
      <path d="M421 284C422 240 455 203 482 203C505 204 514 226 514 248C514 290 482 328 454 328C432 328 420 308 421 284Z" />
      <path d="M467 219L504 249L469 311L431 282ZM460 231L504 249" />
      <path d="M428 178L635 106M447 187L668 111M514 258L672 177" />
      <path d="M658 106L668 111C662 120 656 130 656 146C656 162 663 172 672 177L688 183" />
      <path d="M693 106C678 120 671 138 671 157C672 173 680 184 692 184C714 183 734 155 734 128C734 118 731 110 727 106" />
      <path d="M681 152C681 130 695 114 708 114C717 114 723 122 723 133C723 150 708 170 696 170C687 170 681 162 681 152Z" />
    </g>
    <circle cx="495" cy="253" r="47" stroke="#333" />
    <path d="M538 230L766 106" stroke="#333" />
    <path d="M537 231l6-5 1 3z" fill="#111" />
    <path d="M391.500 106v128h216M588 221l20 13-20 13" stroke="#2f6be0" strokeWidth="2" />

    {/* detail E */}
    <path d="M691 352A94 94 0 01876 340M691 378A94 94 0 00788 453" stroke="#222" strokeDasharray="12 6 4 6" />
    <path d="M690 354L727 291L802 351L749 445M714 315L802 351M783 264C811 283 824 318 822 350C820 388 808 422 789 452M822 368L876 340" stroke="#111" strokeWidth="1.500" />

    {/* bottom view */}
    <path d="M502.500 507.500h109v130h-109zM539.500 528.500h72v87h-72zM561.500 514.500h29v14h-29zM561.500 615.500h29v15h-29z" stroke="#111" strokeWidth="1.500" />

    <path d="M540.500 353.500h152v44h-152z" stroke="#e0a878" strokeDasharray="12 5 3 5" />
    <g fill="#222" className="text-[18px]">
      <text x="541" y="371">Isometric view</text>
      <text x="541" y="392">{"Scale:\u00a0\u00a02:1"}</text>
      <text x="784" y="496">Detail E</text>
      <text x="784" y="517">{"Scale:\u00a0\u00a04:1"}</text>
    </g>
    <circle cx="588" cy="389" r="7" stroke="#2fae96" strokeWidth="4" strokeOpacity=".75" />
    <path d="M581 386a7 7 0 0112-2" stroke="#b7f0e2" strokeWidth="2" />
    <text x="533" y="645" fill="#111" className="font-['Liberation_Sans',sans-serif] text-[27px]">www.apanus.com</text>
  </svg>
);

type PaletteT = { title: string; className: string; vertical?: boolean; children: ReactNode };

const Palette: FC<PaletteT> = ({ title, className, vertical, children }) => {
  const [isOpen, setIsOpen] = useState(true);
  if (!isOpen) return null;

  return (
    <section className={clsx("absolute flex flex-col border border-[#4c4b4b] bg-[#d9d6cf] px-[5px] pb-[5px] shadow-[0_1px_10px_2px_rgba(0,0,0,0.65)]", className)}>
      <div className="flex h-[23px] shrink-0 items-center justify-between pl-px">
        <h2 className="text-[11px] whitespace-nowrap text-[#26282c]">{title}</h2>
        <button
          type="button"
          aria-label={`Close ${title}`}
          onClick={() => setIsOpen(false)}
          className="flex size-[15px] shrink-0 items-center justify-center border border-[#8f5350] bg-linear-to-b from-[#dc9a94] to-[#c04844]"
        >
          <svg className="size-2" viewBox="0 0 8 8"><path d="M1 1l6 6M7 1l-6 6" stroke="#fff" strokeWidth="2" /></svg>
        </button>
      </div>
      <div
        className={clsx(
          "flex min-h-0 flex-1 items-center border-x border-y-2 border-x-[#77757e] border-y-[#222] bg-linear-to-b from-[#f1f0f9] via-[#cfcce6] via-40% to-[#b0adc6]",
          vertical ? "flex-col" : "pl-1"
        )}
      >
        {vertical ? <span className="mt-1 h-0.5 w-4 shrink-0 border-b border-[#a9a6c0] bg-white" /> : <Grip className="mb-2" />}
        <div className="flex flex-1 items-center justify-around pl-0.5">{children}</div>
      </div>
    </section>
  );
};

const Palettes = () => (
  <>
    <Palette title="Views" className="top-1 left-[751px] h-[66px] w-[206px]">
      <IconButton name="frontView" label="Front view" menu />
      <IconButton name="sectionView" label="Offset section view" menu />
      <IconButton name="detailView" label="Detail view" menu />
      <IconButton name="clipView" label="Clipping view" menu />
      <IconButton name="breakView" label="Broken view" menu />
      <Divider />
      <IconButton name="wizard" label="View creation wizard" menu />
    </Palette>
    <Palette title="Drawing" className="top-[97px] left-[827px] h-[65px] w-[110px]">
      <IconButton name="sheet" label="New sheet" menu />
      <IconButton name="newDetail" label="New detail sheet" />
      <IconButton name="instantiate" label="Instantiate 2D component" />
    </Palette>
    <Palette title="Dimensioning" className="top-[179px] left-[902px] h-[65px] w-[149px]">
      <IconButton name="dimension" label="Dimensions" menu />
      <IconButton name="dimensionGen" label="Technological feature dimensions" menu />
      <IconButton name="interrupt" label="Create interruption" menu />
      <Divider />
      <IconButton name="datum" label="Datum feature" menu />
    </Palette>
    <Palette title="Annotations" className="top-[254px] left-[928px] h-[65px] w-[113px]">
      <IconButton name="text" label="Text" menu />
      <IconButton name="roughness" label="Roughness symbol" menu />
      <IconButton name="grid" label="Table" menu />
    </Palette>
    <Palette title="Gen..." className="top-[332px] left-[878px] h-[65px] w-[57px]">
      <IconButton name="generate" label="Generate dimensions" menu />
    </Palette>
    <Palette title="T..." vertical className="top-[327px] left-[956px] h-[70px] w-[47px]">
      <IconButton name="textPos" label="Text properties" />
    </Palette>
    <Palette title="C..." vertical className="top-[334px] left-[1014px] h-[69px] w-[47px]">
      <IconButton name="cascade" label="Cascade" />
    </Palette>
    <Palette title="Visualization" className="top-[402px] left-[891px] h-[64px] w-[176px]">
      <IconButton name="gridBlue" label="Sketcher grid" />
      <Divider />
      <IconButton name="analysis" label="Analysis display mode" />
      <IconButton name="filter" label="Display view frame" />
      <IconButton name="magnify" label="Filter generated elements" />
      <Divider />
      <IconButton name="showConstraint" label="Show constraints" />
    </Palette>
    <Palette title="Positioning" className="top-[479px] left-[746px] h-[64px] w-[134px]">
      <IconButton name="posA" label="Element positioning" />
      <IconButton name="posB" label="Align to reference" />
      <IconButton name="posC" label="Line up" />
      <IconButton name="posD" label="Position leader" />
    </Palette>
    <Palette title="Tools" className="top-[482px] left-[881px] h-[66px] w-[185px]">
      <IconButton name="snap" label="Snap to point" />
      <Divider />
      <IconButton name="checkDim" label="Create detected constraints" />
      <IconButton name="checkHand" label="Dimension system selection" />
      <Divider />
      <IconButton name="filterDim" label="Filter dimensions" />
      <Divider />
      <IconButton name="traffic" label="Tool mode" menu />
    </Palette>
  </>
);

const sheets = [1, 2, 3, 4, 5, 6, 7, 8, 9];

const DocumentWindow = () => {
  const [activeSheet, setActiveSheet] = useState(7);

  return (
    <main className="relative mb-1 ml-[6px] flex min-w-0 flex-1 flex-col border-r-2 border-b-2 border-[#444] bg-[#f0f0f2] px-[5px] pb-[5px]">
      <div role="tablist" className="flex h-[29px] shrink-0 items-center border-b border-[#8d8d92] font-[Roboto,sans-serif] text-[11px]">
        {sheets.map((sheet) => (
          <button
            type="button"
            role="tab"
            key={sheet}
            aria-selected={sheet === activeSheet}
            onClick={() => setActiveSheet(sheet)}
            className={clsx("h-[18px] w-[56px] shrink-0 border-r-2 border-[#444] pl-2 text-left", sheet === activeSheet && "bg-[#f8f8fa]")}
          >
            Sheet.{sheet}
          </button>
        ))}
      </div>
      <div className="min-h-0 flex-1 overflow-hidden border-x border-b border-[#a3a3a8] bg-[#fdfdfd]">
        <Drawing />
      </div>
      <Palettes />
    </main>
  );
};

const sideGroups: { className: string; tools: [string, string][] }[] = [
  { className: "mt-1", tools: [["workbench", "Drafting workbench"]] },
  { className: "mt-2.5", tools: [["select", "Select"], ["orbit", "Update"]] },
  { className: "mt-1.5", tools: [["point", "Point"], ["line", "Line"], ["circle", "Circle"], ["rect", "Rectangle"], ["spline", "Spline"]] },
  { className: "mt-2.5", tools: [["corner", "Corner"], ["mirror", "Mirror"], ["constraint", "Constraint"]] },
  { className: "mt-6", tools: [["target", "Axis target"], ["hatch", "Area fill"], ["arrows", "Arrow"]] },
];

const SideToolbar = () => (
  <div className="flex shrink-0 bg-[#fdfdfd]">
    <div className="ml-1 w-[26px] overflow-hidden bg-[#cfcbe6]">
      {sideGroups.map(({ className, tools }) => (
        <div key={tools[0][0]} className={clsx("flex flex-col items-center pl-1", className)}>
          <span className="mb-[5px] h-0.5 w-4 self-start border-b border-[#a9a6c0] bg-white" />
          {tools.map(([name, label]) => (
            <IconButton key={name} name={name} label={label} />
          ))}
        </div>
      ))}
    </div>
    <div className="w-1.5 bg-white" />
  </div>
);

const BottomToolbar = () => (
  <div className="flex h-9 shrink-0 items-center overflow-hidden border-b border-[#85829a] bg-linear-to-b from-[#f6f5fb] via-[#cfcbe6] via-35% to-[#b9b6d0] pl-1.5">
    <Grip className="mb-2 mr-1.5" />
    <IconButton name="newFile" label="New" className="w-[26px]" />
    <IconButton name="open" label="Open" className="w-[26px]" />
    <IconButton name="save" label="Save" className="w-[26px]" />
    <IconButton name="print" label="Quick print" className="w-[26px]" />
    <IconButton name="cut" label="Cut" className="w-[26px]" />
    <IconButton name="copy" label="Copy" className="w-[26px]" />
    <IconButton name="paste" label="Paste" className="w-[26px]" />
    <IconButton name="undo" label="Undo" menu className="w-[26px]" />
    <IconButton name="redo" label="Redo" menu className="ml-1 w-[26px]" />
    <IconButton name="help" label="What's this?" className="w-[26px]" />
    <Grip className="mx-2 mb-2 ml-3" />
    <IconButton name="formula" label="Formula" className="w-[26px]" />
    <IconButton name="comment" label="Comment" className="w-[26px]" />
    <IconButton name="link" label="Check" className="w-[22px]" />
    <IconButton name="table" label="Design table" menu className="w-[26px]" />
    <IconButton name="structure" label="Knowledge inspector" className="w-[28px]" />
    <IconButton name="lock" label="Lock" menu className="w-[26px]" />
    <IconButton name="equiv" label="Equivalent dimensions" className="w-[26px]" />
    <Grip className="mr-1.5 mb-2 ml-2.5" />
    <IconButton name="fitAll" label="Fit all in" className="w-[26px]" />
    <IconButton name="pan" label="Pan" className="w-[26px]" />
    <IconButton name="zoomIn" label="Zoom in" className="w-[26px]" />
    <IconButton name="zoomOut" label="Zoom out" className="w-[26px]" />
    <IconButton name="viewSwap" label="Hide/Show" className="w-[26px]" />
    <IconButton name="viewHide" label="Swap visible space" className="w-[26px]" />
    <Grip className="mr-1.5 mb-2 ml-3" />
    <IconButton name="swirl" label="Update all" className="w-[26px]" />
    <Grip className="mb-2 ml-1.5 mr-2" />
    <IconButton name="ruler" label="Measure between" className="w-[26px]" />
    <IconButton name="caliper" label="Measure item" className="w-[26px]" />
    <Grip className="mb-2" />
    <IconButton name="slab" label="Apply material" className="ml-4.5 w-[26px]" />
    <Grip className="mb-2 ml-6" />
    <IconButton name="robot" label="Simulation" className="ml-7 w-[26px]" />
    <IconButton name="explode" label="Explode" className="w-[26px]" />
    <svg className="mr-1.5 ml-auto h-[34px] w-[38px] shrink-0 overflow-hidden" viewBox="0 0 38 34" fill="none">
      <path d="M10 5q8-3 8 0t-6 5" stroke="#d8203c" strokeWidth="2" />
      <path d="M6 12l-3 9q7-1 9-6 1-3-6-3" stroke="#25407c" strokeWidth="2" />
      <path d="M22 11q-6-1-7 2t3 3 0 4-6 1" stroke="#e8b03a" strokeWidth="2" />
      <text x="8" y="30" fill="#25407c" className="font-['Liberation_Sans',sans-serif] text-[9px] font-bold italic">CATIA</text>
    </svg>
  </div>
);

const StatusBar = () => (
  <footer className="flex h-[22px] shrink-0 items-center border-b-2 border-[#77757e] bg-[#cfcbe6] pl-1 text-[11px]">
    <p className="font-[Roboto,sans-serif]">Text.1/DrwDressUp.1/Isometric view preselected</p>
    <input aria-label="Power input" type="text" className="ml-auto h-[18px] w-[266px] bg-white px-1" />
    <IconButton name="statusBox" label="Dialog" className="h-[18px] w-7 border-r border-[#85829a]" />
    <IconButton name="statusCam" label="Capture" className="mr-5 h-[18px] w-7" />
  </footer>
);

const App = () => (
  <div className="flex h-screen min-h-[720px] w-full flex-col overflow-hidden bg-[#f0f0f2] font-['Open_Sans','Noto_Sans',sans-serif] text-[#16161c]">
    <TitleBar />
    <MenuBar />
    <TopToolbar />
    <div className="flex min-h-0 flex-1 pt-0.5">
      <TreePanel />
      <DocumentWindow />
      <SideToolbar />
    </div>
    <BottomToolbar />
    <StatusBar />
  </div>
);

export default App;
